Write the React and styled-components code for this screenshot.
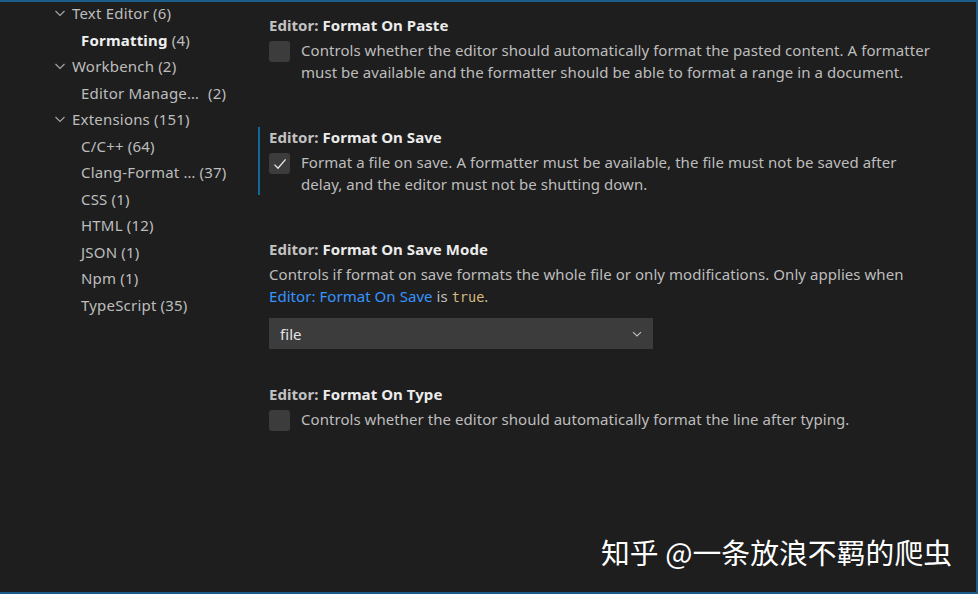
import styled, { createGlobalStyle } from "styled-components";

const GlobalStyle = createGlobalStyle`
  html, body {
    margin: 0;
    padding: 0;
    background: #1e1e1e;
  }
  * {
    box-sizing: border-box;
  }
`;

const tree = [
  { label: "Text Editor", count: 6, parent: true },
  { label: "Formatting", count: 4, active: true },
  { label: "Workbench", count: 2, parent: true },
  { label: "Editor Manage…", count: 2, gap: true },
  { label: "Extensions", count: 151, parent: true },
  { label: "C/C++", count: 64 },
  { label: "Clang-Format …", count: 37 },
  { label: "CSS", count: 1 },
  { label: "HTML", count: 12 },
  { label: "JSON", count: 1 },
  { label: "Npm", count: 1 },
  { label: "TypeScript", count: 35 },
];

const Chevron = () => (
  <svg width="12" height="12" viewBox="0 0 12 12" fill="none">
    <path d="M1.5 4 L6 8.5 L10.5 4" stroke="#a8a8a8" strokeWidth="1.1" />
  </svg>
);

const Check = () => (
  <svg width="16" height="16" viewBox="0 0 16 16" fill="none">
    <path d="M2.5 8.6 L6 12.2 L13.6 3.4" stroke="#e8e8e8" strokeWidth="1.3" />
  </svg>
);

const SelectArrow = () => (
  <svg width="12" height="12" viewBox="0 0 12 12" fill="none">
    <path d="M2 4.2 L6 8 L10 4.2" stroke="#c0c0c0" strokeWidth="1.1" />
  </svg>
);

const Setting = ({ title, focused, checkbox, checked, children }) => (
  <Item $focused={focused}>
    <Title>
      <Category>Editor: </Category>
      {title}
    </Title>
    {checkbox ? (
      <CheckRow>
        <Box>{checked && <Check />}</Box>
        <Description>{children}</Description>
      </CheckRow>
    ) : (
      children
    )}
  </Item>
);

export default function App() {
  return (
    <>
      <GlobalStyle />
      <Frame>
        <Sidebar>
          {tree.map((node) => (
            <TreeRow key={node.label} $parent={node.parent}>
              {node.parent && (
                <Twisty>
                  <Chevron />
                </Twisty>
              )}
              <Label $active={node.active}>{node.label}</Label>
              <Count $gap={node.gap}>({node.count})</Count>
            </TreeRow>
          ))}
        </Sidebar>

        <Content>
          <Setting title="Format On Paste" checkbox>
            Controls whether the editor should automatically format the pasted content. A formatter
            <br />
            must be available and the formatter should be able to format a range in a document.
          </Setting>

          <Setting title="Format On Save" checkbox checked focused>
            Format a file on save. A formatter must be available, the file must not be saved after
            <br />
            delay, and the editor must not be shutting down.
          </Setting>

          <Setting title="Format On Save Mode">
            <Description>
              Controls if format on save formats the whole file or only modifications. Only applies when
              <br />
              <Link>Editor: Format On Save</Link> is <Code>true</Code>.
            </Description>
            <Select>
              <span>file</span>
              <SelectArrow />
            </Select>
          </Setting>

          <Setting title="Format On Type" checkbox>
            Controls whether the editor should automatically format the line after typing.
          </Setting>
        </Content>

        <Watermark>知乎 @一条放浪不羁的爬虫</Watermark>
      </Frame>
    </>
  );
}

const Frame = styled.div`
  position: relative;
  display: grid;
  grid-template-columns: 258px 1fr;
  width: 978px;
  height: 594px;
  overflow: hidden;
  background: #1e1e1e;
  border-top: 2px solid #1b5c88;
  border-right: 2px solid #1b5c88;
  border-bottom: 2px solid #1b5c88;
  font-family: "Noto Sans", "Open Sans", sans-serif;
  font-size: 15px;
  letter-spacing: 0.05px;
  color: #bdbdbd;
`;

const Sidebar = styled.div`
  display: flex;
  flex-direction: column;
  margin-top: -2px;
`;

const TreeRow = styled.div`
  display: flex;
  align-items: center;
  height: 26.5px;
  padding-left: ${(p) => (p.$parent ? "54px" : "81px")};
  white-space: nowrap;
  letter-spacing: 0.2px;
`;

const Twisty = styled.span`
  display: flex;
  align-items: center;
  width: 18px;
`;

const Label = styled.span`
  color: ${(p) => (p.$active ? "#f0f0f0" : "#bdbdbd")};
  font-weight: ${(p) => (p.$active ? 700 : 400)};
`;

const Count = styled.span`
  margin-left: ${(p) => (p.$gap ? "9px" : "4px")};
  color: #bdbdbd;
`;

const Content = styled.div`
  display: flex;
  flex-direction: column;
  padding-top: 13px;
`;

const Item = styled.div`
  border-left: 2px solid ${(p) => (p.$focused ? "#0f6a99" : "transparent")};
  padding-left: 9px;
  margin-bottom: 44px;
`;

const Title = styled.div`
  line-height: 20px;
  font-weight: 700;
  color: #ececec;
  white-space: nowrap;
`;

const Category = styled.span`
  color: #c2c2c2;
`;

const CheckRow = styled.div`
  display: flex;
  align-items: flex-start;
  margin-top: 4px;
`;

const Box = styled.div`
  flex: none;
  display: flex;
  align-items: center;
  justify-content: center;
  width: 21px;
  height: 21px;
  margin-top: 2px;
  margin-right: 11px;
  border-radius: 3px;
  background: #3c3c3c;
`;

const Description = styled.div`
  line-height: 22px;
  color: #bdbdbd;
  white-space: nowrap;
  margin-top: 4px;

  ${CheckRow} & {
    margin-top: 0;
  }
`;

const Link = styled.span`
  color: #3794ff;
`;

const Code = styled.span`
  font-family: "DejaVu Sans Mono", monospace;
  font-size: 13.5px;
  color: #d7ba7d;
`;

const Select = styled.div`
  display: flex;
  align-items: center;
  justify-content: space-between;
  width: 384px;
  height: 31px;
  margin-top: 10px;
  margin-bottom: -9px;
  padding: 0 10px 0 11px;
  background: #3c3c3c;
  color: #e4e4e4;
`;

const Watermark = styled.div`
  position: absolute;
  left: 601px;
  top: 531px;
  font-family: "Noto Sans CJK SC", sans-serif;
  font-size: 28.8px;
  line-height: 38px;
  color: #ffffff;
  white-space: nowrap;
`;
